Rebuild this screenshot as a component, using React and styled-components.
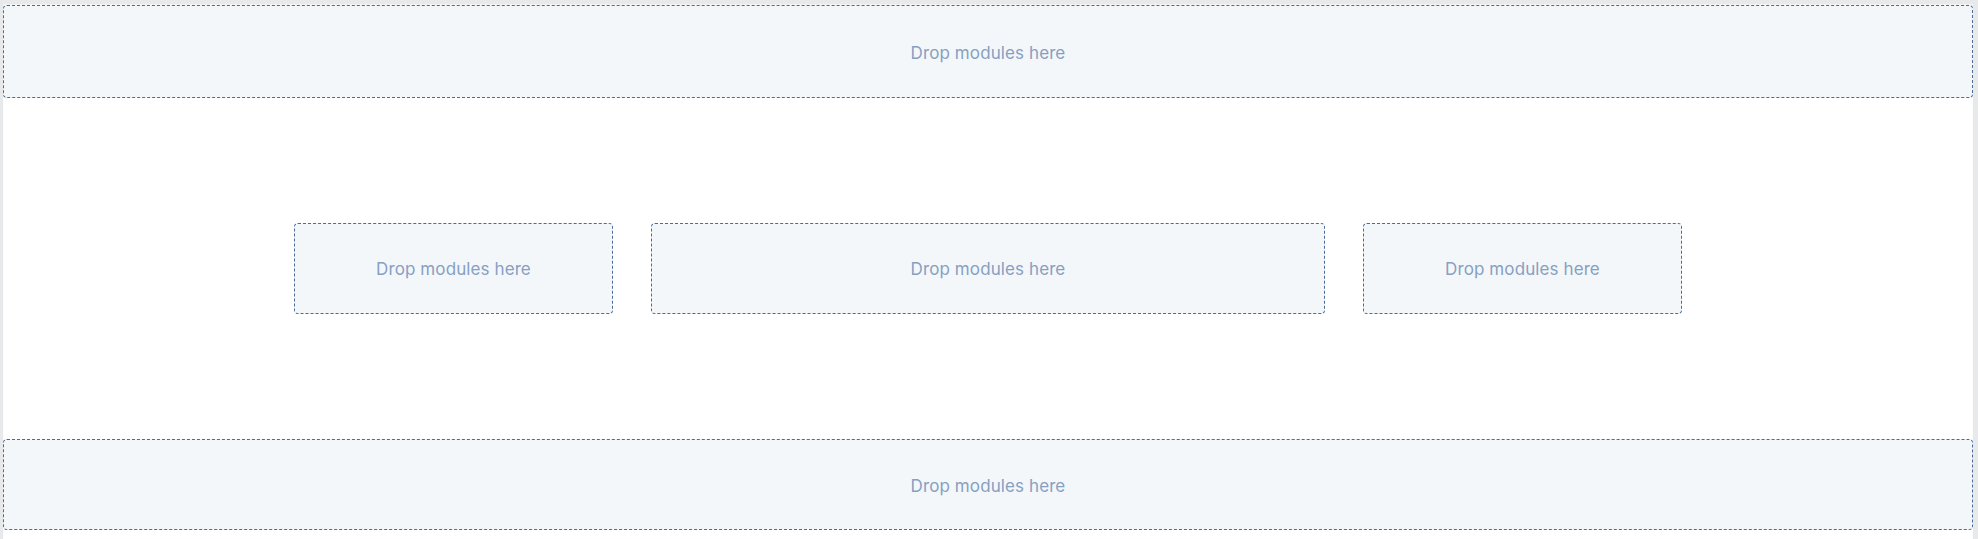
import React from "react";
import styled, { createGlobalStyle } from "styled-components";

const GlobalStyle = createGlobalStyle`
  html, body {
    margin: 0;
    padding: 0;
    background: #e8e9ea;
  }
  body {
    font-family: Inter, "Noto Sans", sans-serif;
  }
`;

// white page canvas sitting on the grey editor backdrop
const Canvas = styled.div`
  width: 1970px;
  margin: 4px 0 0 3px;
  height: 535px;
  background: #ffffff;
  display: flex;
  flex-direction: column;
  box-shadow: inset 0 1px 2px rgba(0, 0, 0, 0.06);
`;

const Section = styled.section`
  display: flex;
  justify-content: center;
  align-items: center;
  flex: ${(p) => (p.grow ? 1 : "none")};
`;

const Columns = styled.div`
  display: grid;
  grid-template-columns: 319px 674px 319px;
  column-gap: 38px;
  margin-top: -1px;
`;

const DropZone = styled.div`
  box-sizing: border-box;
  width: ${(p) => (p.full ? "100%" : "auto")};
  height: ${(p) => p.h || 92}px;
  margin-top: ${(p) => p.mt || 0}px;
  padding-top: 2px;
  display: flex;
  align-items: center;
  justify-content: center;
  background: #f3f7fa;
  border: 1px dashed #4b6c9b;
  border-radius: 4px;
  color: #87a0c2;
  font-size: 17px;
  font-weight: 400;
  letter-spacing: 0.1px;
`;

const Footer = styled.div`
  height: 9px;
`;

function App() {
  return (
    <>
      <GlobalStyle />
      <Canvas>
        <Section>
          <DropZone full h={93} mt={1}>Drop modules here</DropZone>
        </Section>
        <Section grow>
          <Columns>
            <DropZone h={91}>Drop modules here</DropZone>
            <DropZone h={91}>Drop modules here</DropZone>
            <DropZone h={91}>Drop modules here</DropZone>
          </Columns>
        </Section>
        <Section>
          <DropZone full h={91}>Drop modules here</DropZone>
        </Section>
        <Footer />
      </Canvas>
    </>
  );
}

export default App;
